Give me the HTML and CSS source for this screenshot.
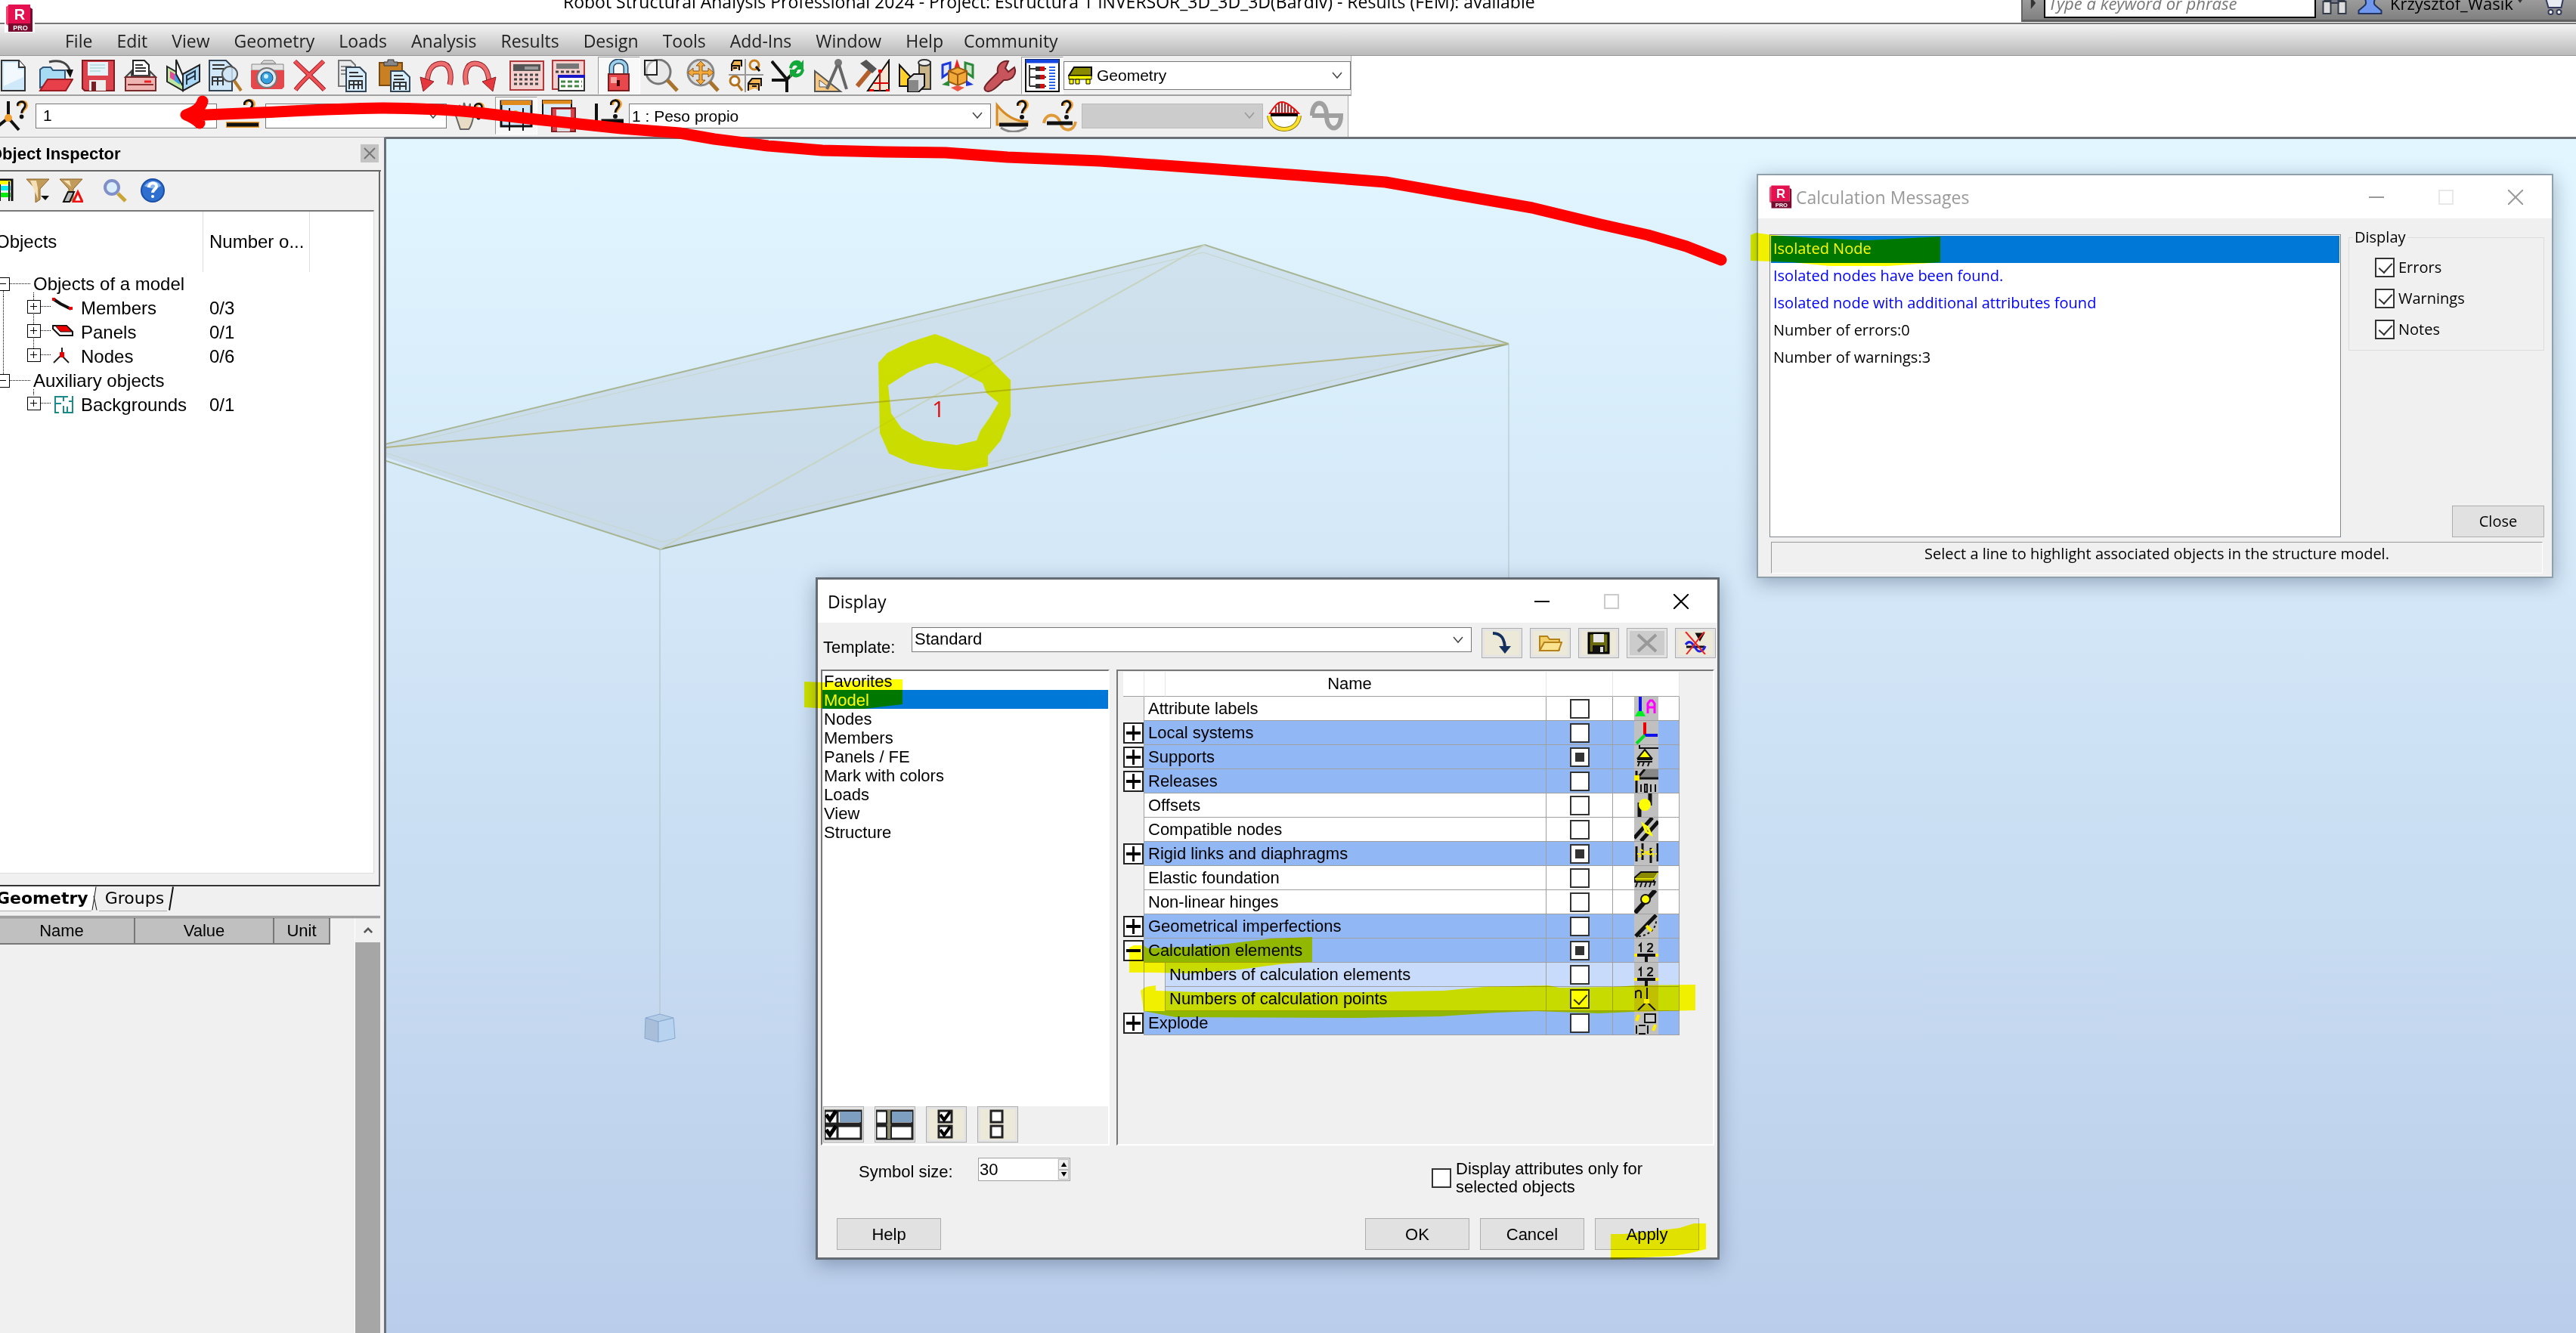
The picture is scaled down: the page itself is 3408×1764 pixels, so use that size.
FILE: index.html
```html
<!DOCTYPE html>
<html lang="en">
<head>
<meta charset="utf-8">
<title>Robot Structural Analysis Professional 2024</title>
<link rel="stylesheet" href="styles.css">
</head>
<body>
<svg class="defs" aria-hidden="true">
  <symbol id="chevron" viewBox="0 0 14 10"><path d="M1 1l6 7 6-7" fill="none" stroke="currentColor" stroke-width="1.5"/></symbol>
  <symbol id="logo" viewBox="0 0 36 36">
    <path d="M0 3l5-3v29l-5-3z" fill="#f0466e"/><path d="M3 0h29v25H3z" fill="#e51050"/><path d="M3 25h32V6l-3-2v21H3v11h32V25z" fill="#7a0a2e"/>
    <text x="18" y="20" text-anchor="middle" font-size="20" class="logo-text">R</text>
    <text x="19" y="34" text-anchor="middle" font-size="9" class="logo-text">PRO</text>
  </symbol>
  <symbol id="question" viewBox="0 0 16 26"><path d="M3 8c0-8 11-8 11-1 0 5-6 5-6 11" fill="none" stroke="#f0a030" stroke-width="4"/><path d="M1 8c0-8 11-8 11-1 0 5-5 5-5 11" fill="none" stroke="#111" stroke-width="3"/><circle cx="7" cy="23" r="3" fill="#111"/></symbol>
</svg>

<div class="app">
  <header class="titlebar">
    <svg class="app-logo"><use href="#logo"/></svg>
    <h1 class="app-title">Robot Structural Analysis Professional 2024 - Project: Estructura 1 INVERSOR_3D_3D_3D(Bardiv) - Results (FEM): available</h1>
    <div class="infocenter">
      <svg class="info-arrow" viewBox="0 0 8 20"><path d="M0 0l8 10-8 10z" fill="#333"/></svg>
      <input class="info-search" type="text" placeholder="Type a keyword or phrase" aria-label="Search">
      <svg class="info-icon" viewBox="0 0 32 40"><g fill="#ddd" stroke="#333a48" stroke-width="2"><path d="M5 4h8v16H3zM19 4h8l2 16H19z"/><path d="M1 22h10v16H1zM21 22h10v16H21z"/><path d="M11 18h10v6H11z" fill="#778"/></g></svg>
      <svg class="info-icon" viewBox="0 0 32 40"><path d="M16 2c10 0 9 12 6 18-1 4-1 6 2 8l7 6v4H1v-4l7-6c3-2 3-4 2-8C7 14 6 2 16 2z" fill="#6f97ee" stroke="#23345f" stroke-width="2"/></svg>
      <a class="info-user" href="#">Krzysztof_Wasik</a>
      <svg class="info-caret" viewBox="0 0 10 7"><path d="M0 0h10L5 7z" fill="#333"/></svg>
      <svg class="info-icon cart" viewBox="0 0 32 40"><path d="M1 16h5l4 14h17l3-14H8" fill="#e8ebf2" stroke="#333a5c" stroke-width="2"/><circle cx="13" cy="36" r="3" fill="#fff" stroke="#333a5c" stroke-width="2"/><circle cx="24" cy="36" r="3" fill="#fff" stroke="#333a5c" stroke-width="2"/></svg>
    </div>
  </header>

  <nav class="menubar">
    <a href="#">File</a><a href="#">Edit</a><a href="#">View</a><a href="#">Geometry</a><a href="#">Loads</a><a href="#">Analysis</a><a href="#">Results</a><a href="#">Design</a><a href="#">Tools</a><a href="#">Add-Ins</a><a href="#">Window</a><a href="#">Help</a><a href="#">Community</a>
  </nav>

  <div class="toolbar first">
    <button class="tool" aria-label="New"><svg viewBox="0 0 46 44"><path d="M7 2h23l8 9v31H7z" fill="#cfe9fb" stroke="#333" stroke-width="2"/><path d="M10 5h18v9h8v10L10 36z" fill="#fff" opacity=".7"/><path d="M30 2v9h8" fill="#fff" stroke="#333" stroke-width="2"/></svg></button>
    <button class="tool" aria-label="Open"><svg viewBox="0 0 46 44"><path d="M2 38V14l4-3h10l3 4h16v12z" fill="#a6dbf3" stroke="#357" stroke-width="2"/><path d="M2 42l10-15h33L36 42z" fill="#e8404a" stroke="#9b1c22" stroke-width="2"/><path d="M14 4c16-4 26 2 28 14" fill="none" stroke="#444" stroke-width="3"/><path d="M36 14h10l-4 11z" fill="#111"/></svg></button>
    <button class="tool" aria-label="Save"><svg viewBox="0 0 46 44"><path d="M2 2h42v40H5l-3-3z" fill="#dd434c" stroke="#7c1d22" stroke-width="2"/><path d="M9 4h27v18H9z" fill="#e6f3f9"/><path d="M12 8h20M12 12h20M12 16h14" stroke="#9cc"/><path d="M11 28h22v14H11z" fill="#eee"/><path d="M14 30h6v12h-6z" fill="#7c1d22"/></svg></button>
    <button class="tool" aria-label="Print"><svg viewBox="0 0 46 44"><path d="M13 2h15l6 6v14H13z" fill="#fff" stroke="#222" stroke-width="2"/><path d="M16 8h10M16 12h14M16 16h14" stroke="#333" stroke-width="2"/><path d="M3 24l8-8v6h24v-6l8 8z" fill="#ddd" stroke="#444" stroke-width="2"/><path d="M3 24h40v18H3z" fill="#eeb5b3" stroke="#7a2a2a" stroke-width="2"/><path d="M6 34h34" stroke="#8a3030" stroke-width="2"/><path d="M28 30h9" stroke="#e22" stroke-width="3"/></svg></button>
    <button class="tool" aria-label="Page layout"><svg viewBox="0 0 46 44"><path d="M2 10l21 12v20L2 30z" fill="#bfe7a0" stroke="#222" stroke-width="2"/><path d="M6 16l8 5v9l-8-5z" fill="#e6489a"/><path d="M12 20l7 5v9l-7-5z" fill="#3a9be6"/><path d="M14 1l9 21v14L14 20z" fill="#fff" stroke="#222" stroke-width="2"/><path d="M23 20L45 8v22L23 42z" fill="#a9d7f5" stroke="#222" stroke-width="2"/><path d="M28 34V22l11-6v12M28 28l11-6" fill="none" stroke="#234" stroke-width="2"/></svg></button>
    <button class="tool" aria-label="Preview"><svg viewBox="0 0 46 44"><path d="M2 2h22l8 8v32H2z" fill="#cfe7f8" stroke="#345" stroke-width="2"/><path d="M6 8h16M6 13h18M6 35V24h14v11M6 29h14M13 24v11" fill="none" stroke="#333" stroke-width="2"/><circle cx="29" cy="20" r="10" fill="#cfe6f5" fill-opacity=".8" stroke="#555" stroke-width="2"/><path d="M35 29l9 13" stroke="#b57a28" stroke-width="4"/></svg></button>
    <button class="tool" aria-label="Screen capture"><svg viewBox="0 0 46 44"><path d="M14 6l4-4h12l4 4z" fill="#ddd" stroke="#777"/><path d="M2 7h42v8H2z" fill="#e4e4e4" stroke="#888"/><path d="M1 15h44v22l-3 3H4l-3-3z" fill="#e4474c"/><circle cx="22" cy="25" r="13" fill="#dfe9f0" stroke="#777" stroke-width="2"/><circle cx="22" cy="25" r="8" fill="#35a0dd" stroke="#146"/><circle cx="21" cy="23" r="3" fill="#c8f0ff"/></svg></button>
    <button class="tool" aria-label="Delete"><svg viewBox="0 0 46 44"><path d="M3 3c10 10 30 28 39 38M41 3C30 14 12 30 4 41" stroke="#9b1c20" stroke-width="6"/><path d="M3 3c10 10 30 28 39 38M41 3C30 14 12 30 4 41" stroke="#ee5055" stroke-width="4"/></svg></button>
    <button class="tool" aria-label="Copy"><svg viewBox="0 0 46 44"><path d="M5 2h16l6 6v28H5z" fill="#e8eaec" stroke="#777" stroke-width="2"/><path d="M8 10h14M8 15h14M8 20h10" stroke="#888" stroke-width="2"/><path d="M15 11h18l8 8v24H15z" fill="#d7edfb" stroke="#345" stroke-width="2"/><path d="M19 18h12M19 23h18M19 40V29h17v11M19 34h17M25 29v11M31 29v11" fill="none" stroke="#333" stroke-width="2"/></svg></button>
    <button class="tool" aria-label="Paste"><svg viewBox="0 0 46 44"><path d="M3 5h30v30H3z" fill="#c98022" stroke="#7a4a10" stroke-width="2"/><path d="M9 9V4h5V1h8v3h5v5z" fill="#888" stroke="#333"/><path d="M18 16h17l8 8v19H18z" fill="#d7edfb" stroke="#345" stroke-width="2"/><path d="M22 22h12M22 27h14M22 41V31h16v10M22 36h16M30 31v10" fill="none" stroke="#333" stroke-width="2"/></svg></button>
    <button class="tool" aria-label="Undo"><svg viewBox="0 0 46 44"><path d="M10 34C10 14 18 6 29 6c12 0 14 16 11 28" fill="none" stroke="#8e1d22" stroke-width="7"/><path d="M10 34C10 14 18 6 29 6c12 0 14 16 11 28" fill="none" stroke="#ee6e70" stroke-width="5"/><path d="M1 24l18 6L5 43z" fill="#e5383e" stroke="#8e1d22"/></svg></button>
    <button class="tool" aria-label="Redo"><svg viewBox="0 0 46 44"><path d="M36 34C36 14 28 6 17 6 5 6 3 22 6 34" fill="none" stroke="#8e1d22" stroke-width="7"/><path d="M36 34C36 14 28 6 17 6 5 6 3 22 6 34" fill="none" stroke="#ee6e70" stroke-width="5"/><path d="M45 24l-18 6 14 13z" fill="#e5383e" stroke="#8e1d22"/></svg></button>
    <span class="gap"></span>
    <button class="tool" aria-label="Calculate"><svg viewBox="0 0 46 44"><path d="M1 3h44v38H1z" fill="#f3cfcd" stroke="#b0393b" stroke-width="2"/><path d="M5 7h36v9H5z" fill="#555"/><path d="M20 12h18" stroke="#999" stroke-width="4"/><path d="M6 21h34M6 27h34M6 33h34" stroke="#444" stroke-width="3" stroke-dasharray="4 3"/></svg></button>
    <button class="tool" aria-label="Calculation report"><svg viewBox="0 0 46 44"><path d="M1 2h42v38H1z" fill="#f3cfcd" stroke="#b0393b" stroke-width="2"/><path d="M6 6h30v7H6z" fill="#777"/><path d="M5 17h34" stroke="#444" stroke-width="3" stroke-dasharray="4 3"/><path d="M9 22h34v20H9z" fill="#fff" stroke="#333" stroke-width="2"/><path d="M8 23h36" stroke="#1717c8" stroke-width="4"/><path d="M12 30h28M12 36h28" stroke="#484" stroke-width="3" stroke-dasharray="6 3"/></svg></button>
    <span class="gap wide"></span>
    <button class="tool pressed" aria-label="Lock"><svg viewBox="0 0 46 44"><path d="M13 20v-8c0-12 19-12 19 0v8" fill="none" stroke="#246" stroke-width="7"/><path d="M13 20v-8c0-12 19-12 19 0v8" fill="none" stroke="#9fd0ea" stroke-width="4"/><path d="M9 20h27v22H9z" fill="#e8484c" stroke="#7c1d22" stroke-width="2"/><path d="M12 24h8v8h-8z" fill="#f7a6a6"/><path d="M22 28v8" stroke="#400" stroke-width="4"/></svg></button>
    <button class="tool" aria-label="Zoom window"><svg viewBox="0 0 46 44"><circle cx="19" cy="17" r="16" fill="#e8e8e8" stroke="#777" stroke-width="3"/><path d="M1 2h16v19H1z" fill="#fff" fill-opacity=".5" stroke="#222" stroke-width="2"/><path d="M31 28l13 14" stroke="#a8732c" stroke-width="5"/></svg></button>
    <button class="tool" aria-label="Zoom all"><svg viewBox="0 0 46 44"><circle cx="19" cy="18" r="17" fill="#ddd" stroke="#888" stroke-width="3"/><path d="M19 3l6 6h-4v7h8v-4l7 6-7 6v-4h-8v8h4l-6 6-6-6h4v-8H9v4l-7-6 7-6v4h8V9h-4z" fill="#f5a93a" stroke="#8a5712"/><path d="M31 30l11 12" stroke="#a8732c" stroke-width="5"/></svg></button>
    <button class="tool" aria-label="Views"><svg viewBox="0 0 46 44"><path d="M22 0v44M0 21h46" stroke="#999" stroke-width="2"/><path d="M4 16V7l3-5h10v8M4 9h10v6M6 12h5" fill="#f0b455" stroke="#111" stroke-width="2"/><circle cx="34" cy="8" r="6" fill="none" stroke="#c77c1a" stroke-width="3"/><path d="M36 10l5 6" stroke="#111" stroke-width="3"/><circle cx="8" cy="29" r="6" fill="#fff" stroke="#b3731c" stroke-width="3"/><path d="M12 34l6 8" stroke="#b3731c" stroke-width="3"/><path d="M26 42V32l5-6h12v10M26 33h14v9M31 36h6" fill="#f0b455" stroke="#111" stroke-width="2"/></svg></button>
    <button class="tool" aria-label="Redraw"><svg viewBox="0 0 46 44"><path d="M1 3l20 24v17M1 28h22M21 27l12-12" fill="none" stroke="#111" stroke-width="4"/><path d="M24 12c2-12 14-12 16-7l3-4v13H31l4-4c-3-3-7-1-7 3zM44 14c-2 12-14 12-16 8l-3 3V14h11l-4 4c3 3 7 1 8-4z" fill="#12a83a"/></svg></button>
    <button class="tool" aria-label="Snap settings"><svg viewBox="0 0 46 44"><path d="M2 16l34 27H2z" fill="#f8c780" stroke="#555" stroke-width="2"/><path d="M8 28l12 9H8z" fill="#eee" stroke="#555"/><circle cx="33" cy="5" r="5" fill="#777"/><path d="M32 8L18 40M34 8l10 32" stroke="#666" stroke-width="4"/></svg></button>
    <button class="tool" aria-label="Structure tools"><svg viewBox="0 0 46 44"><path d="M16 42L44 2v40z" fill="#f4e6d2" stroke="#111" stroke-width="2"/><path d="M24 32h20M32 18v24" stroke="#d90000" stroke-width="2"/><path d="M18 40h6v3h-6zM30 14h5v4h-5zM40 40h5v3h-5z" fill="#e00"/><path d="M2 36L22 12" stroke="#b4602a" stroke-width="6"/><path d="M6 6l8-5 14 12-6 6z" fill="#555"/></svg></button>
    <button class="tool" aria-label="Sections and materials"><svg viewBox="0 0 46 44"><path d="M2 8l26 28H2z" fill="#ffd02a" stroke="#111" stroke-width="2"/><path d="M28 4h15v36H28z" fill="#c9b48a" stroke="#333" stroke-width="2"/><ellipse cx="35" cy="5" rx="8" ry="4" fill="#eee" stroke="#333" stroke-width="2"/><path d="M13 27l8-7h14v16l-7 7H13z" fill="#ddd" stroke="#111" stroke-width="2"/><path d="M14 28h13v15H14z" fill="#888"/></svg></button>
    <button class="tool" aria-label="Properties"><svg viewBox="0 0 46 44"><path d="M3 8l10-3v12L3 24zM3 8v14" fill="#e3e8ff" stroke="#1c38d8" stroke-width="3"/><path d="M43 8L33 5v12l10 7z" fill="#cfe6cf" stroke="#2a8a3a" stroke-width="3"/><path d="M22 0l5 14h-9z" fill="#e22"/><path d="M11 16l12-5 12 5v14l-12 5-12-5z" fill="#f3a83a" stroke="#9a5a10" stroke-width="2"/><path d="M11 16l12 5 12-5M23 21v14" stroke="#9a5a10" fill="none" stroke-width="2"/><path d="M2 34l10-6v8z" fill="#2a8a3a"/><path d="M44 34l-10-6v8z" fill="#1c38d8"/><path d="M14 38l9-3 9 3-9 5z" fill="#e54"/></svg></button>
    <button class="tool" aria-label="Preferences"><svg viewBox="0 0 46 44"><path d="M4 42c-5-4 2-10 16-24-2-10 6-16 14-15l-4 9 4 5 8-6c4 10-4 18-14 17C18 38 10 46 4 42z" fill="#c7555b" stroke="#6d2226" stroke-width="2"/></svg></button>
    <button class="tool pressed" aria-label="Object Inspector"><svg viewBox="0 0 46 44"><path d="M1 1h44v42H1z" fill="#fff" stroke="#111" stroke-width="2"/><path d="M1 3h44" stroke="#1646e0" stroke-width="5"/><path d="M6 8v28M6 13h22M6 24h22M6 36h22" stroke="#333" stroke-width="2"/><path d="M14 10h12v6H14zM14 21h12v6H14zM14 33h12v6H14z" fill="#333"/><path d="M20 10h6v6h-6zM20 21h6v6h-6zM20 33h6v6h-6z" fill="#d01010"/><path d="M36 10v30" stroke="#2a64e8" stroke-width="8" stroke-dasharray="2 2"/></svg></button>
    <div class="combo layout-combo">
      <svg class="combo-icon" viewBox="0 0 32 24"><path d="M1 12L8 1h23v11z" fill="#8a8a00" stroke="#000" stroke-width="2"/><path d="M1 12h30v5H1z" fill="#ffff00" stroke="#000"/><path d="M2 17h5v6H2zM10 17h5v6h-5zM24 17h5v6h-5z" fill="#ffff00" stroke="#000"/></svg>
      <select aria-label="Layout"><option>Geometry</option></select><svg class="chevron"><use href="#chevron"/></svg>
    </div>
  </div>

  <div class="toolbar second">
    <button class="tool" aria-label="Select nodes"><svg viewBox="0 0 46 44"><path d="M20 3v22M20 25L4 38M20 25l14 16" stroke="#111" stroke-width="4"/><circle cx="20" cy="25" r="5" fill="#f0a030"/><use href="#question" x="31" y="0" width="15" height="28"/></svg></button>
    <input class="node-input" type="text" value="1" aria-label="Selected nodes">
    <button class="tool" aria-label="Select bars"><svg viewBox="0 0 46 44"><path d="M1 34h44" stroke="#f0a030" stroke-width="8"/><path d="M2 34h42" stroke="#111" stroke-width="5"/><use href="#question" x="24" y="0" width="16" height="26"/></svg></button>
    <div class="combo bar-combo"><select aria-label="Selected bars"><option></option></select><svg class="chevron"><use href="#chevron"/></svg></div>
    <button class="tool" aria-label="Pan"><svg viewBox="0 0 46 44"><path d="M6 22l5-3V8l4 9 2-12 4 13 4-12v14l4-4c2 4-2 20-6 24H12z" fill="#e8dcc4" stroke="#666" stroke-width="2"/><use href="#question" x="30" y="2" width="14" height="28"/></svg></button>
    <span class="gap"></span>
    <button class="tool pressed" aria-label="Attributes"><svg viewBox="0 0 46 44"><path d="M3 3h40v33H3z" fill="#cfe6f8" stroke="#111" stroke-width="3"/><path d="M3 5h40" stroke="#e08a1c" stroke-width="6"/><path d="M14 12v30M32 12v30M3 28h40" stroke="#111" stroke-width="2"/><circle cx="22" cy="19" r="4" fill="#f0a030"/></svg></button>
    <button class="tool" aria-label="Save attributes"><svg viewBox="0 0 46 44"><path d="M2 2h38v26H2z" fill="#d9ecf8" stroke="#111" stroke-width="2"/><path d="M2 4h38" stroke="#e08a1c" stroke-width="5"/><path d="M14 12h31v31H14z" fill="#d8444a" stroke="#7c1d22" stroke-width="2"/><path d="M20 14h19v11H20z" fill="#dcecf4"/><path d="M21 32h17v11H21z" fill="#ddd"/></svg></button>
    <span class="gap"></span>
    <button class="tool" aria-label="Select case"><svg viewBox="0 0 46 44"><path d="M10 6v32" stroke="#111" stroke-width="4"/><path d="M18 28h28v4H18zM20 32v10M27 32v10M34 32v10M42 32v10" stroke="#111" stroke-width="3"/><use href="#question" x="28" y="0" width="16" height="26"/></svg></button>
    <div class="combo case-combo"><select aria-label="Load case"><option>1 : Peso propio</option></select><svg class="chevron"><use href="#chevron"/></svg></div>
    <button class="tool" aria-label="Select modes"><svg viewBox="0 0 46 44"><path d="M3 8v26h40V30C26 30 14 22 3 8z" fill="#f2dcb4" stroke="#d68b24" stroke-width="3"/><path d="M6 34h38" stroke="#111" stroke-width="5"/><path d="M8 38c12 8 24 6 34 0" fill="none" stroke="#888" stroke-width="3"/><use href="#question" x="29" y="0" width="16" height="28"/></svg></button>
    <span class="gap"></span>
    <button class="tool" aria-label="Select mode shape"><svg viewBox="0 0 46 44"><path d="M2 32c2-14 18-14 22 0 3 12 18 12 20-2" fill="none" stroke="#e09a3a" stroke-width="4"/><path d="M6 32h34" stroke="#111" stroke-width="5"/><use href="#question" x="25" y="0" width="16" height="28"/></svg></button>
    <div class="combo mode-combo"><select aria-label="Mode" disabled><option></option></select><svg class="chevron"><use href="#chevron"/></svg></div>
    <button class="tool" aria-label="Diagrams"><svg viewBox="0 0 46 44"><path d="M3 22c2 24 38 24 40 0" fill="#fff" stroke="#8a7a10" stroke-width="6"/><path d="M3 22c2 24 38 24 40 0" fill="none" stroke="#ffe02a" stroke-width="4"/><path d="M4 19C10 10 14 4 20 4s16 8 22 15z" fill="#fff" stroke="#e01010" stroke-width="2"/><path d="M12 10v9M16 6v13M20 5v14M24 6v13M28 8v11M32 11v8M36 14v5" stroke="#e01010" stroke-width="2"/><path d="M5 21h36" stroke="#000" stroke-width="4"/></svg></button>
    <button class="tool" aria-label="Deformations"><svg viewBox="0 0 46 44"><path d="M4 22c0-22 19-22 19 0s19 22 19 0H4" fill="none" stroke="#a0a0a0" stroke-width="6"/></svg></button>
  </div>

  <main class="workspace">
    <aside class="inspector">
      <div class="pane-head"><h2>Object Inspector</h2><button class="pane-close" aria-label="Close pane"><svg viewBox="0 0 24 24"><path d="M5 5l14 14M19 5L5 19" stroke="#777" stroke-width="2"/></svg></button></div>
      <div class="tree-frame">
        <div class="tree-tools">
          <svg viewBox="0 0 32 32"><path d="M0 2h30v28" fill="none" stroke="#111" stroke-width="3"/><path d="M0 3h28v5H0z" fill="#ff0"/><path d="M0 10h28v6H0z" fill="#0ee"/><path d="M0 19h28v6H0z" fill="#0e0"/><path d="M14 8v22M26 4v26" stroke="#111" stroke-width="2"/></svg>
          <svg viewBox="0 0 32 32"><path d="M1 1h30L19 14v14l-6 4V14z" fill="#c29b5a" stroke="#8a6426"/><path d="M6 3h8l2 10v14z" fill="#f3e0b6"/><path d="M20 23h11l-5 6z" fill="#111"/></svg>
          <svg viewBox="0 0 32 32"><path d="M1 1h30L19 14v14l-6 4V14z" fill="#c29b5a" stroke="#8a6426"/><path d="M6 3h8l2 8z" fill="#f3e0b6"/><path d="M6 31l6-13h8l-6 13z" fill="#bbb" stroke="#111" stroke-width="2"/><path d="M19 31l6-13 6 13z" fill="#fff" stroke="#e11" stroke-width="3"/></svg>
          <svg class="spaced" viewBox="0 0 32 32"><circle cx="12" cy="12" r="9" fill="#d9edfb" stroke="#7f8fc8" stroke-width="4"/><path d="M20 20l10 10" stroke="#c9a436" stroke-width="5"/></svg>
          <svg viewBox="0 0 32 32"><circle cx="16" cy="16" r="15" fill="#2f6fd0" stroke="#1b4fa6" stroke-width="2"/><path d="M5 10c6-8 18-8 22 0-6 5-14 4-22 0z" fill="#8ab6f0"/><path d="M11 12c0-8 11-7 10-1-1 4-5 4-5 8" fill="none" stroke="#fff" stroke-width="4"/><circle cx="16" cy="24" r="2" fill="#fff"/></svg>
        </div>
        <div class="tree">
          <div class="tree-row tree-head"><span>Objects</span><span>Number o...</span></div>
          <div class="tree-row"><span><svg class="guide top" viewBox="0 0 58 32"><path class="dots" d="M18 25v7M27 15h28M58 27v5"/><path class="box" d="M9 7h17v17H9zM12 15h10"/></svg>Objects of a model</span><span></span></div>
          <div class="tree-row"><span><svg class="guide" viewBox="0 0 83 32"><path class="dots" d="M18 0v32M58 0v32M68 13h13"/><path class="box" d="M50 5h17v17H50zM54 13h9M58 9v9"/></svg><svg class="node-icon" viewBox="0 0 28 32"><path d="M2 4l9 6 14 7" fill="none" stroke="#111" stroke-width="4"/><path d="M0 2h4v4H0zM22 14h5v4h-5z" fill="#e00"/></svg>Members</span><span>0/3</span></div>
          <div class="tree-row"><span><svg class="guide" viewBox="0 0 83 32"><path class="dots" d="M18 0v32M58 0v32M68 13h13"/><path class="box" d="M50 5h17v17H50zM54 13h9M58 9v9"/></svg><svg class="node-icon" viewBox="0 0 28 32"><path d="M1 7h18l8 8v5H10L1 11z" fill="#fff" stroke="#111" stroke-width="2"/><path d="M4 7h15l7 8H11z" fill="#e00" stroke="#111"/></svg>Panels</span><span>0/1</span></div>
          <div class="tree-row"><span><svg class="guide" viewBox="0 0 83 32"><path class="dots" d="M18 0v32M58 0v20M68 13h13"/><path class="box" d="M50 5h17v17H50zM54 13h9M58 9v9"/></svg><svg class="node-icon" viewBox="0 0 28 32"><path d="M13 4v10M12 14L2 24M12 14l10 10" stroke="#222" stroke-width="2"/><path d="M10 10h6v7h-6z" fill="#e00"/></svg>Nodes</span><span>0/6</span></div>
          <div class="tree-row"><span><svg class="guide top" viewBox="0 0 58 32"><path class="dots" d="M18 0v7M27 15h28M58 27v5"/><path class="box" d="M9 7h17v17H9zM12 15h10"/></svg>Auxiliary objects</span><span></span></div>
          <div class="tree-row"><span><svg class="guide" viewBox="0 0 83 32"><path class="dots" d="M58 0v4M68 13h13"/><path class="box" d="M50 5h17v17H50zM54 13h9M58 9v9"/></svg><svg class="node-icon" viewBox="0 0 28 32"><path d="M9 26H4V5h17M4 14h8M15 5v6M27 4v22H15v-9M27 11h-5M20 26v-8" fill="none" stroke="#1a8a8a" stroke-width="2"/></svg>Backgrounds</span><span>0/1</span></div>
        </div>
      </div>
      <div class="tabs">
        <button class="tab active">Geometry</button><svg class="tab-edge" viewBox="0 0 10 32"><path d="M0 0h6L1 32H0z" fill="#fff"/><path d="M6 0L1 31M3 12l4 19" stroke="#111" fill="none"/></svg><button class="tab">Groups</button><svg class="tab-edge" viewBox="0 0 10 32"><path d="M8 0L3 31" stroke="#111" stroke-width="2"/></svg>
      </div>
      <div class="props">
        <table class="props-table"><thead><tr><th class="c-name">Name</th><th class="c-value">Value</th><th class="c-unit">Unit</th></tr></thead></table>
        <div class="scrollbar"><button class="scroll-up" aria-label="Scroll up"><svg viewBox="0 0 14 10"><path d="M1 8l6-6 6 6" fill="none" stroke="#555" stroke-width="3"/></svg></button><div class="thumb"></div></div>
      </div>
    </aside>

    <section class="viewport">
      <svg class="scene" viewBox="511 184 2897 1580" preserveAspectRatio="xMinYMin meet">
        <path d="M480 595L1594 324 1996 455 873 727z" fill="#a0a8b4" fill-opacity=".22"/>
        <path d="M480 595L1594 324 1996 455" fill="none" stroke="#a9b695" stroke-width="2"/>
        <path d="M1996 455L873 727" stroke="#8c9a78" stroke-width="2"/><path d="M873 727L480 600" stroke="#a9b695" stroke-width="2"/>
        <path d="M500 596L1592 334 1964 455 876 717z" fill="none" stroke="#c6d6ca" stroke-width="1"/>
        <path d="M1594 324L873 727" stroke="#c6d4c2" stroke-width="2"/>
        <path d="M511 592L1996 455" stroke="#b2b682" stroke-width="2"/>
        <path d="M873 727v620M1996 455v320" stroke="#abc2c2" stroke-width="1"/>
        <g stroke="#86a8d0" stroke-width="1"><path d="M854 1347l19-5 18 5-20 5z" fill="#b3cce6"/><path d="M854 1347l17 5v27l-18-5z" fill="#a9bfd9"/><path d="M891 1347l-20 5v27l22-5z" fill="#b7d3f0"/></g>
        <text x="1233" y="552" class="calc-point">1</text>
      </svg>
    </section>
  </main>
</div>

<section class="window messages">
  <header class="win-title muted">
    <svg class="win-logo"><use href="#logo"/></svg><h2>Calculation Messages</h2>
    <button aria-label="Minimize"><svg viewBox="0 0 20 20"><path d="M0 10h20" stroke="currentColor" stroke-width="2"/></svg></button>
    <button aria-label="Maximize" disabled><svg viewBox="0 0 20 20"><path d="M1 1h18v18H1z" fill="none" stroke="currentColor" stroke-width="2"/></svg></button>
    <button aria-label="Close window"><svg viewBox="0 0 20 20"><path d="M0 0l20 20M20 0L0 20" stroke="currentColor" stroke-width="2"/></svg></button>
  </header>
  <div class="msg-body">
    <ul class="msg-list">
      <li class="selected">Isolated Node</li><li class="warn">Isolated nodes have been found.</li><li class="warn">Isolated node with additional attributes found</li><li>Number of errors:0</li><li>Number of warnings:3</li>
    </ul>
    <div class="msg-side">
      <fieldset><legend>Display</legend>
        <label><input type="checkbox" checked>Errors</label><label><input type="checkbox" checked>Warnings</label><label><input type="checkbox" checked>Notes</label>
      </fieldset>
      <button class="btn small">Close</button>
    </div>
  </div>
  <p class="msg-status">Select a line to highlight associated objects in the structure model.</p>
</section>

<section class="window display">
  <header class="win-title">
    <h2>Display</h2>
    <button aria-label="Minimize"><svg viewBox="0 0 20 20"><path d="M0 10h20" stroke="currentColor" stroke-width="2"/></svg></button>
    <button aria-label="Maximize" disabled><svg viewBox="0 0 20 20"><path d="M1 1h18v18H1z" fill="none" stroke="currentColor" stroke-width="2"/></svg></button>
    <button aria-label="Close window"><svg viewBox="0 0 20 20"><path d="M0 0l20 20M20 0L0 20" stroke="currentColor" stroke-width="2"/></svg></button>
  </header>
  <div class="template-row">
    <label for="template">Template:</label>
    <div class="combo"><select id="template"><option>Standard</option></select><svg class="chevron"><use href="#chevron"/></svg></div>
    <button class="icon-btn" aria-label="Apply template"><svg viewBox="0 0 32 30"><path d="M4 2c12 0 16 8 16 22" fill="none" stroke="#14305e" stroke-width="4"/><path d="M12 19h16l-8 10z" fill="#14305e"/></svg></button>
    <button class="icon-btn" aria-label="Open template"><svg viewBox="0 0 32 30"><path d="M2 24V6h10l3 4h13v14z" fill="#f2cf68" stroke="#b5821a" stroke-width="2"/><path d="M2 25l6-11h23l-4 11z" fill="#fbe28e" stroke="#b5821a" stroke-width="2"/></svg></button>
    <button class="icon-btn" aria-label="Save template"><svg viewBox="0 0 32 30"><path d="M3 2h26v26H3z" fill="#6a6a10" stroke="#000" stroke-width="3"/><path d="M9 3h14v11H9z" fill="#e8e8e8"/><path d="M8 18h16v10H8z" fill="#111"/><path d="M18 20h4v7h-4z" fill="#ddd"/></svg></button>
    <button class="icon-btn off" aria-label="Delete template" disabled><svg viewBox="0 0 32 30"><path d="M4 4l24 22M28 4L4 26" stroke="#999" stroke-width="4"/></svg></button>
    <button class="icon-btn" aria-label="Hide all"><svg viewBox="0 0 32 30"><path d="M18 3h8l-4 7zM4 20h24" stroke="#111" stroke-width="3"/><path d="M3 17c6-8 10 0 14 6s10 2 12-4" fill="none" stroke="#22d" stroke-width="3"/><path d="M3 0l26 30M28 0L4 30" stroke="#e22" stroke-width="2"/></svg></button>
  </div>
  <div class="panes">
    <div class="categories">
      <ul><li>Favorites</li><li class="selected">Model</li><li>Nodes</li><li>Members</li><li>Panels / FE</li><li>Mark with colors</li><li>Loads</li><li>View</li><li>Structure</li></ul>
      <div class="cat-tools">
        <button class="icon-btn tall" aria-label="Check category"><svg viewBox="0 0 50 42"><path d="M0 3h48v17H0zM0 23h48v17H0z" fill="#fff" stroke="#222" stroke-width="3"/><path d="M20 4h28v14H20z" fill="#7f9fc0"/><path d="M17 2v38" stroke="#222" stroke-width="3"/><path d="M2 8l5 7 8-12M2 28l5 7 8-12" fill="none" stroke="#000" stroke-width="5"/></svg></button>
        <button class="icon-btn tall" aria-label="Uncheck category"><svg viewBox="0 0 50 42"><path d="M0 3h48v17H0zM0 23h48v17H0z" fill="#fff" stroke="#222" stroke-width="3"/><path d="M20 4h28v14H20z" fill="#7f9fc0"/><path d="M17 2v38" stroke="#8a8a70" stroke-width="5"/><path d="M14 3v17M14 23v17M20 3v17M20 23v17" stroke="#222" stroke-width="2"/></svg></button>
        <button class="icon-btn tall" aria-label="Check all"><svg viewBox="0 0 50 42"><path d="M15 3h17v15H15zM15 23h17v15H15z" fill="#fff" stroke="#222" stroke-width="3"/><path d="M17 8l5 7 8-11M17 28l5 7 8-11" fill="none" stroke="#000" stroke-width="4"/></svg></button>
        <button class="icon-btn tall" aria-label="Uncheck all"><svg viewBox="0 0 50 42"><path d="M16 3h15v15H16zM16 23h15v15H16z" fill="#fff" stroke="#222" stroke-width="3"/></svg></button>
      </div>
    </div>
    <div class="attributes">
      <table>
        <colgroup><col class="w-tree"><col class="w-tree"><col class="w-name"><col class="w-check"><col class="w-check"></colgroup>
        <thead><tr><th></th><th></th><th class="name-head">Name</th><th></th><th></th></tr></thead>
        <tbody>
        <tr><td class="gut"></td><td colspan="2">Attribute labels</td><td class="mid"><input type="checkbox" aria-label="Attribute labels"></td><td class="mid"><svg viewBox="0 0 32 31"><path d="M8 0v20" stroke="#11e" stroke-width="4"/><path d="M1 26l4-7h6l4 7z" fill="#0e2"/><path d="M18 22V9l3-4h3l3 4v13M18 14h9" fill="none" stroke="#f0f" stroke-width="3"/></svg></td></tr>
        <tr class="group"><td class="gut"><button class="expand" aria-label="Expand"></button></td><td colspan="2">Local systems</td><td class="mid"><input type="checkbox" aria-label="Local systems"></td><td class="mid"><svg viewBox="0 0 32 31"><path d="M14 2v17" stroke="#e00" stroke-width="4"/><path d="M14 19h17" stroke="#11e" stroke-width="4"/><path d="M14 19L3 30" stroke="#0d2" stroke-width="4"/></svg></td></tr>
        <tr class="group"><td class="gut"><button class="expand" aria-label="Expand"></button></td><td colspan="2">Supports</td><td class="mid"><input class="partial" type="checkbox" aria-label="Supports"></td><td class="mid"><svg viewBox="0 0 32 31"><path d="M7 0v4h25M4 19h20" stroke="#111" stroke-width="2" fill="none"/><path d="M14 6l9 11H5z" fill="#ff0" stroke="#111" stroke-width="2"/><path d="M4 22h20M7 22l-2 6M13 22l-2 6M20 22l-2 6" stroke="#111" stroke-width="2"/></svg></td></tr>
        <tr class="group"><td class="gut"><button class="expand" aria-label="Expand"></button></td><td colspan="2">Releases</td><td class="mid"><input type="checkbox" aria-label="Releases"></td><td class="mid"><svg viewBox="0 0 32 31"><path d="M14 0h18v12H6z" fill="#888"/><path d="M3 2v29M2 12h30M4 12L14 0" stroke="#111" stroke-width="3"/><path d="M0 8h7v7H0z" fill="#fe0"/><path d="M9 20v10M14 20h3v10h-3zM22 20v10M28 20v10" fill="none" stroke="#111" stroke-width="2"/></svg></td></tr>
        <tr><td class="gut"></td><td colspan="2">Offsets</td><td class="mid"><input type="checkbox" aria-label="Offsets"></td><td class="mid"><svg viewBox="0 0 32 31"><path d="M7 12v19M21 0v16" stroke="#111" stroke-width="5"/><circle cx="14" cy="15" r="8" fill="#ff0"/></svg></td></tr>
        <tr><td class="gut"></td><td colspan="2">Compatible nodes</td><td class="mid"><input type="checkbox" aria-label="Compatible nodes"></td><td class="mid"><svg viewBox="0 0 32 31"><path d="M0 27L24 0M9 31L32 5" stroke="#111" stroke-width="5"/><path d="M12 9l6 4 4 9-6-3z" fill="none" stroke="#ff0" stroke-width="3"/></svg></td></tr>
        <tr class="group"><td class="gut"><button class="expand" aria-label="Expand"></button></td><td colspan="2">Rigid links and diaphragms</td><td class="mid"><input class="partial" type="checkbox" aria-label="Rigid links and diaphragms"></td><td class="mid"><svg viewBox="0 0 32 31"><path d="M3 6v20M11 2v22M22 8v20M31 2v24" stroke="#111" stroke-width="3"/><path d="M4 16h26M6 20L26 9M8 10l18 9" stroke="#fe0" stroke-width="2" stroke-dasharray="4 2"/></svg></td></tr>
        <tr><td class="gut"></td><td colspan="2">Elastic foundation</td><td class="mid"><input type="checkbox" aria-label="Elastic foundation"></td><td class="mid"><svg viewBox="0 0 32 31"><path d="M1 15L9 8h22l-5 9v4H1z" fill="#8a8a00" stroke="#111" stroke-width="2"/><path d="M1 17h25l5-8" stroke="#dd0" fill="none" stroke-width="2"/><path d="M4 22l-2 6M10 22l-2 6M16 22l-2 6M22 22l-2 6M28 20l-2 6" stroke="#111" stroke-width="2"/></svg></td></tr>
        <tr><td class="gut"></td><td colspan="2">Non-linear hinges</td><td class="mid"><input type="checkbox" aria-label="Non-linear hinges"></td><td class="mid"><svg viewBox="0 0 32 31"><path d="M1 30L28 0" stroke="#111" stroke-width="6"/><circle cx="15" cy="12" r="6" fill="#ff0" stroke="#111" stroke-width="2"/></svg></td></tr>
        <tr class="group"><td class="gut"><button class="expand" aria-label="Expand"></button></td><td colspan="2">Geometrical imperfections</td><td class="mid"><input type="checkbox" aria-label="Geometrical imperfections"></td><td class="mid"><svg viewBox="0 0 32 31"><path d="M2 29L29 1" stroke="#111" stroke-width="5"/><path d="M6 29C20 28 30 18 29 6" fill="none" stroke="#111" stroke-width="2" stroke-dasharray="3 3"/><path d="M16 15l7 7" stroke="#fe0" stroke-width="4"/></svg></td></tr>
        <tr class="group"><td class="gut"><button class="expand open" aria-label="Collapse"></button></td><td colspan="2">Calculation elements</td><td class="mid"><input class="partial" type="checkbox" aria-label="Calculation elements"></td><td class="mid"><svg viewBox="0 0 32 31"><path d="M6 10l3-3v11M18 9c0-3 6-3 6 0 0 4-6 5-6 8h7" fill="none" stroke="#111" stroke-width="2"/><path d="M3 22h26M16 22v9" stroke="#111" stroke-width="4"/><path d="M0 20h4v4H0zM28 20h4v4h-4z" fill="#fe0"/></svg></td></tr>
        <tr class="sub"><td class="gut"></td><td class="gut"></td><td>Numbers of calculation elements</td><td class="mid"><input type="checkbox" aria-label="Numbers of calculation elements"></td><td class="mid"><svg viewBox="0 0 32 31"><path d="M6 10l3-3v11M18 9c0-3 6-3 6 0 0 4-6 5-6 8h7" fill="none" stroke="#111" stroke-width="2"/><path d="M3 22h26M16 22v9" stroke="#111" stroke-width="4"/><path d="M0 20h4v4H0zM28 20h4v4h-4z" fill="#fe0"/></svg></td></tr>
        <tr class="sub"><td class="gut"></td><td class="gut"></td><td>Numbers of calculation points</td><td class="mid"><input type="checkbox" checked aria-label="Numbers of calculation points"></td><td class="mid"><svg viewBox="0 0 32 31"><path d="M2 5v10M2 7c3-3 7-3 7 1v7M17 1v16M16 20L5 31M17 20l11 11" fill="none" stroke="#111" stroke-width="2"/><path d="M13 16h7v6h-7z" fill="#fe0"/></svg></td></tr>
        <tr class="group"><td class="gut"><button class="expand" aria-label="Expand"></button></td><td colspan="2">Explode</td><td class="mid"><input type="checkbox" aria-label="Explode"></td><td class="mid"><svg viewBox="0 0 32 31"><path d="M14 4h14v11H14z" fill="#ccc" stroke="#111" stroke-width="2"/><path d="M3 19v11M18 19v11M6 19h9M6 30h9" stroke="#111" stroke-width="2"/><path d="M3 13l3-8M25 26l3-8" stroke="#fe0" stroke-width="4"/></svg></td></tr>
        </tbody>
      </table>
    </div>
  </div>
  <div class="options-row">
    <label for="symbol-size">Symbol size:</label>
    <div class="spin"><input id="symbol-size" type="text" value="30"><div class="spin-btns"><button aria-label="Increase"><svg viewBox="0 0 10 8"><path d="M0 8h10L5 0z"/></svg></button><button aria-label="Decrease"><svg viewBox="0 0 10 8"><path d="M0 0h10L5 8z"/></svg></button></div></div>
    <label class="only-selected"><input type="checkbox"><span>Display attributes only for<br>selected objects</span></label>
  </div>
  <footer class="buttons"><button class="btn">Help</button><span class="push"></span><button class="btn">OK</button><button class="btn">Cancel</button><button class="btn">Apply</button></footer>
</section>

<svg class="marker" aria-hidden="true">
  <g fill="#ffff00">
    <path d="M2316 311L2323 308 2344 311 2399 315 2470 318 2512 316 2567 313V347L2498 352H2420L2371 347 2316 345z"/>
    <path d="M1064 902L1088 903 1180 899H1194V932L1160 936 1143 938H1100L1064 936z"/>
    <path fill-rule="evenodd" d="M1237 442L1251 447 1309 473 1314 480 1337 503V550L1324 583 1307 603V617L1278 623 1242 620 1205 613 1176 600 1164 573 1162 480 1174 467 1203 453zM1239 480L1261 487 1300 507 1305 520 1321 533 1309 553 1297 570 1292 583 1266 589 1222 583 1193 567 1179 547 1175 510 1203 492 1227 482z"/>
    <path d="M1494 1254L1500 1251H1513L1518 1255 1598 1252 1682 1242 1736 1240V1273L1693 1276 1640 1283 1576 1288 1523 1287H1494z"/>
    <path d="M1509 1311L1516 1306 1529 1304V1311L1587 1313H1799L1910 1311 1963 1306 2048 1304 2063 1307 2138 1306 2164 1304 2243 1303V1337L2159 1339 2116 1341 2032 1338 1979 1340 1905 1345 1799 1347 1555 1346 1513 1338z"/>
    <path d="M2131 1633H2148L2167 1631 2198 1628 2222 1625 2241 1619H2257V1653L2237 1658 2214 1662 2175 1664 2131 1667z"/>
  </g>
</svg>
<svg class="pen" aria-hidden="true">
  <path d="M2277 344L2231 326 2180 311 2118 297 2027 275 1924 257 1833 241 1720 232 1598 223 1455 213 1333 208 1251 202 1169 201 1088 199 1016 193 945 184 899 176 822 170 700 157 640 150C600 145 540 143 505 143 440 144 390 147 344 149L250 153M268 134C266 142 258 148 246 152 252 154 262 160 264 163" fill="none" stroke="#ff0000" stroke-width="15" stroke-linecap="round" stroke-linejoin="round"/>
</svg>
</body>
</html>
```
FILE: styles.css
```css
* { box-sizing: border-box; }
body { margin: 0; position: relative; min-height: 100vh; overflow: hidden; background: #fff; color: #000; font: 22px/25px "Liberation Sans", Arial, sans-serif; }
button, input, select { font: inherit; color: inherit; padding: 0; margin: 0; border-radius: 0; }
button { border: 0; background: none; }
h1, h2, p, ul { margin: 0; padding: 0; font-weight: normal; }
ul { list-style: none; }
svg { display: block; flex: none; }
.defs { position: absolute; width: 0; height: 0; }
.logo-text { font-family: "Liberation Sans", Arial, sans-serif; font-weight: bold; fill: #fff; }

/* The main window hangs a little off the top left corner of the screen. */
.app { display: flex; flex-direction: column; height: calc(100vh + 20px); margin: -20px 0 0 -14px; font-size: 21px; }

.titlebar { position: relative; display: flex; height: 52px; border-bottom: 2px solid #777; background: #fff; font: 23px/30px "Open Sans", "Noto Sans", sans-serif; }
.app-logo { position: absolute; z-index: 1; left: 20px; top: 25px; width: 40px; height: 38px; padding: 1px 2px; background: #fff; }
.app-title { font-size: 23px; line-height: 30px; margin: 7px auto 0 759px; white-space: nowrap; }
.infocenter { display: flex; align-items: flex-end; width: 734px; height: 49px; padding: 0 0 2px 10px; border-left: 2px solid #666; border-bottom: 3px solid #5e5e5e; background: linear-gradient(#b0b0b0, #808080); }
.info-arrow { width: 8px; height: 16px; margin-bottom: 12px; }
.info-search { width: 360px; height: 44px; margin: 0 8px 0 10px; padding: 4px 6px 0 4px; border: 2px solid #000; background: #fff; font-size: 22px; font-style: italic; }
.info-search::placeholder { color: #777; opacity: 1; }
.info-icon { width: 33px; height: 40px; margin: 0 14px 4px 0; }
.info-user { margin: 0 4px 5px -4px; color: #000; text-decoration: none; font-size: 22px; }
.info-caret { width: 10px; height: 7px; margin: 0 22px 20px 0; }
.info-icon.cart { margin-right: 0; }

.menubar { display: flex; height: 42px; padding: 3px 0 0 100px; border-bottom: 1px solid #999; background: linear-gradient(#f3f3f3, #bababa); font: 23px/38px "Open Sans", "Noto Sans", sans-serif; gap: 32px; }
.menubar a { color: #222; text-decoration: none; }
.menubar a:last-child { margin-left: -5px; }

.toolbar { display: flex; align-items: center; align-self: flex-start; background: #f0f0f0; border-right: 1px solid #aaa; border-bottom: 2px solid #a0a0a0; }
.toolbar.first { height: 53px; padding-left: 4px; }
.toolbar.second { height: 54px; padding-bottom: 2px; border-bottom: 0; }
.tool { display: grid; place-items: center; flex: none; width: 56px; height: 50px; }
.tool svg { width: 46px; height: 44px; }
.tool.pressed { background: #f8f8f8; border: 1px solid #999; border-right-color: #fff; border-bottom-color: #fff; }
.gap { flex: none; width: 7px; }
.gap.wide { width: 10px; }

.combo { position: relative; display: flex; align-items: center; flex: none; height: 33px; border: 1px solid #777; background: #fff; }
.combo select { appearance: none; flex: 1; width: 100%; height: 100%; padding: 0 30px 0 3px; border: 0; background: none; }
.chevron { position: absolute; right: 10px; width: 14px; height: 10px; color: #444; pointer-events: none; }
.layout-combo { width: 380px; height: 38px; padding-left: 5px; }
.combo-icon { width: 32px; height: 24px; margin-right: 3px; }
.node-input { width: 240px; height: 33px; margin: 0 6px 0 5px; padding: 0 9px; border: 1px solid #777; background: #fff; }
.bar-combo { width: 240px; margin: 0 1px 0 2px; }
.case-combo { width: 479px; margin-left: 2px; }
.mode-combo { width: 240px; margin-left: 1px; border-color: #bbb; background: #ccc; }
.mode-combo .chevron { color: #999; }

.workspace { display: flex; flex: 1; min-height: 0; }
.inspector { display: flex; flex-direction: column; flex: none; width: 525px; border-top: 1px solid #aaa; border-right: 3px solid #6a7076; background: #f0f0f0; }
.pane-head { display: flex; justify-content: space-between; height: 45px; padding: 9px 3px 0 0; border-bottom: 2px solid #666; margin-right: 4px; }
.pane-head h2 { padding-top: 1px; font-size: 22px; line-height: 24px; font-weight: bold; }
.pane-close, .pane-close svg { width: 24px; height: 24px; background: #c3c3c3; }
.tree-frame { display: flex; flex-direction: column; flex: 1; margin-right: 5px; padding: 0 6px 15px 0; border-right: 2px solid #666; border-bottom: 2px solid #333; }
.tree-tools { display: flex; align-items: center; height: 51px; padding-bottom: 1px; gap: 12px; }
.tree-tools svg { width: 32px; height: 32px; }
.tree-tools svg:nth-child(2) { margin-left: 4px; }
.tree-tools .spaced { margin: 0 6px 0 14px; }
.tree { flex: 1; border: 1px solid #ddd; border-left: 0; border-top: 2px solid #777; background: #fff; font-size: 24px; }
.tree-row { display: grid; grid-template-columns: 283px 141px 1fr; height: 32px; line-height: 32px; white-space: nowrap; }
.tree-row > span { display: flex; }
.tree-row > span + span { padding-left: 8px; }
.tree-head { height: 80px; line-height: 80px; }
.tree-head > span { padding-left: 8px; border-right: 1px solid #ddd; }
.guide { width: 83px; height: 32px; overflow: visible; }
.guide.top { width: 58px; }
.guide path { fill: none; stroke: #000; shape-rendering: crispEdges; }
.dots { stroke-dasharray: 1 1; }
.guide .box { fill: #fff; }
.node-icon { width: 28px; height: 32px; margin-right: 10px; }
.tabs { display: flex; height: 39px; font: 22px/32px "DejaVu Sans", Verdana, sans-serif; }
.tab { height: 33px; padding: 0 4px 0 8px; border-bottom: 1px solid #aaa; }
.tab.active { padding-left: 9px; background: #fff; font-weight: bold; }
.tab-edge { width: 10px; height: 33px; }
.props { display: flex; justify-content: space-between; flex: 0 0 552px; margin-right: 5px; border-top: 3px double #666; }
.props-table { align-self: flex-start; border-collapse: collapse; table-layout: fixed; width: 451px; }
.props-table th { height: 34px; padding: 0; border: solid #777; border-width: 0 2px 2px 0; background: #c0c0c0; font-size: 22px; line-height: 30px; font-weight: normal; }
.props-table .c-name { width: 192px; }
.props-table .c-value { width: 184px; }
.scrollbar { display: flex; flex-direction: column; width: 34px; border-left: 1px solid #fff; }
.scroll-up { display: grid; place-items: center; height: 32px; }
.scroll-up svg { width: 12px; height: 9px; }
.thumb { flex: 1; background: #a6a6a6; }

.viewport { flex: 1; border-top: 3px solid #6a7076; background: linear-gradient(#e1f6ff, #bacdea); overflow: hidden; }
.scene { width: 100%; height: 100%; }
.calc-point { font: 30px "Open Sans", sans-serif; fill: #e01010; }

/* Floating windows */
.window { position: absolute; display: flex; flex-direction: column; background: #f0f0f0; box-shadow: 0 6px 24px rgba(0, 20, 50, .3); }
.win-title { display: flex; align-items: center; background: #fff; font: 23px/30px "Open Sans", "Noto Sans", sans-serif; }
.win-title h2 { flex: 1; font-size: 23px; }
.win-title button { display: grid; place-items: center; width: 92px; height: 40px; }
.win-title button svg { width: 20px; height: 20px; }
.win-title button:disabled { color: #ccc; }
.win-title.muted { color: #999; }
.win-title.muted button:disabled { color: #e8e8e8; }
.btn { width: 138px; height: 42px; border: 1px solid #adadad; background: #e1e1e1; }
input[type="checkbox"] { appearance: none; position: relative; flex: none; width: 26px; height: 26px; border: 2px solid #333; background: #fff; }
input[type="checkbox"]:checked::after { content: ""; position: absolute; left: 7px; top: 1px; width: 8px; height: 15px; border: solid #333; border-width: 0 2px 2px 0; transform: rotate(42deg); }
input.partial::after { content: ""; position: absolute; inset: 5px; background: #333; }
.selected { background: #0078d7; color: #fff; }

.messages { left: 2324px; top: 230px; width: 1054px; height: 535px; border: 2px solid #8fa0aa; font: 20px/36px "Open Sans", "Noto Sans", sans-serif; }
.messages .win-title { height: 57px; padding: 0 2px 0 15px; }
.win-logo { width: 30px; height: 33px; margin-right: 5px; }
.msg-body { display: flex; flex: 1; gap: 10px; padding: 21px 10px 0 15px; }
.msg-list { width: 756px; border: 1px solid #828790; padding: 1px; background: #fff; }
.msg-list li { height: 36px; line-height: 33px; padding-left: 3px; }
.msg-list .warn { color: #0000ff; }
.msg-side { display: flex; flex-direction: column; justify-content: space-between; flex: 1; }
fieldset { height: 162px; margin: -8px 0 0; padding: 7px 0 0 34px; border: 1px solid #dcdcdc; }
legend { margin-left: -29px; padding: 0 2px; line-height: 24px; }
fieldset label { display: flex; align-items: center; gap: 5px; height: 41px; }
.btn.small { align-self: flex-end; width: 122px; line-height: 36px; }
.msg-status { height: 42px; margin: 6px 12px 4px 17px; border: 1px solid #999; border-right-color: #fff; border-bottom-color: #fff; line-height: 30px; text-align: center; }

.display { left: 1079px; top: 764px; width: 1196px; height: 903px; border: 3px solid #646b72; }
.display .win-title { height: 57px; padding: 0 2px 0 13px; }
.template-row { display: flex; height: 62px; padding: 6px 2px 0 7px; }
.template-row label { width: 117px; padding-top: 15px; line-height: 24px; }
.template-row .combo { flex: 1; height: 33px; margin-right: 13px; }
.template-row select { padding-bottom: 3px; }
.icon-btn { display: grid; place-items: center; flex: none; width: 54px; height: 40px; margin: 1px 10px 0 0; border: 1px solid #adadad; background: #ece9d8; box-shadow: inset 0 0 0 3px #e4e4e4; }
.icon-btn svg { width: 32px; height: 30px; }
.icon-btn.off { background: #ccc; }
.template-row .icon-btn:last-child { margin-right: 0; }
.panes { display: flex; gap: 9px; height: 630px; padding: 0 4px; }
.categories { display: flex; flex-direction: column; width: 382px; border: 2px solid; border-color: #777 #fff #fff #777; }
.categories ul { flex: 1; background: #fff; }
.categories li { height: 25px; line-height: 27px; padding-left: 2px; }
.cat-tools { display: flex; gap: 14px; height: 50px; padding-left: 1px; }
.icon-btn.tall { height: 48px; margin: 0; }
.icon-btn.tall svg { width: 50px; height: 42px; }
.attributes { flex: 1; padding: 1px 0 0 7px; border: 2px solid; border-color: #777 #fff #fff #777; }
.attributes table { width: 736px; border-collapse: separate; border-spacing: 0; table-layout: fixed; background: #fff; }
.w-tree { width: 28px; }
.w-check { width: 88px; }
.attributes th, .attributes td { height: 32px; padding: 0; border: solid #a0a0a0; border-width: 0 1px 1px 0; line-height: 31px; font-weight: normal; }
.attributes th { height: 33px; border-right-color: #e5e5e5; line-height: 32px; }
.attributes .name-head { padding-right: 16px; }
.attributes td { padding-left: 5px; }
.attributes .gut { padding: 0; border-bottom: 0; background: #f0f0f0; }
.attributes .mid { padding: 0; }
.attributes .mid > * { display: block; margin: 0 auto; }
.attributes .mid svg { width: 32px; height: 31px; background: #c0c0c0; }
.group { background: #91b7f5; }
.sub { background: #c8dbfa; }
.expand { display: block; position: relative; width: 27px; height: 28px; border: 2px solid #222; background: #fff; }
.expand::before, .expand::after { content: ""; position: absolute; inset: 10px 2px; background: #000; }
.expand::after { inset: 2px 10px; }
.expand.open::after { display: none; }
.options-row { display: flex; height: 96px; padding: 16px 72px 0 54px; }
.options-row > label { width: 158px; padding-top: 7px; line-height: 24px; }
.spin { display: flex; width: 122px; height: 31px; border: 1px solid #a0a0a0; background: #fff; }
.spin input { flex: 1; width: 80px; padding: 0 1px; border: 0; background: none; }
.spin-btns { display: flex; flex-direction: column; width: 16px; padding: 1px; background: #eee; }
.spin-btns button { display: grid; place-items: center; flex: 1; border: 1px solid #bbb; }
.spin-btns svg { width: 9px; height: 6px; }
.options-row .only-selected { display: flex; align-items: center; gap: 6px; width: 306px; height: 54px; margin-left: auto; padding: 0; line-height: 24px; }
.buttons { display: flex; gap: 14px; padding: 0 24px 0 25px; }
.push { flex: 1; }

/* Hand-drawn marks on top of everything */
.marker, .pen { position: absolute; inset: 0; width: 100%; height: 100%; pointer-events: none; }
.marker { mix-blend-mode: multiply; }
```
